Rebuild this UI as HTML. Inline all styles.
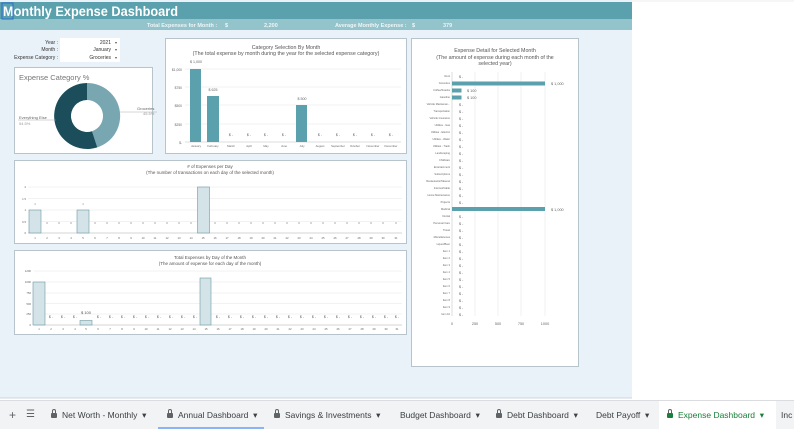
<!DOCTYPE html>
<html><head><meta charset="utf-8"><style>
body{margin:0;width:794px;height:428px;overflow:hidden;background:#fff;font-family:"Liberation Sans",sans-serif;position:relative}
.tabs{position:absolute;left:0;top:400px;width:794px;height:28px;background:#f1f3f4;border-top:1px solid #dadce0;font-size:8.5px;color:#3c4043}
.tab{position:absolute;top:0;height:28px;line-height:28px;white-space:nowrap}
.lock{display:inline-block;width:6px;height:5px;background:#5f6368;border-radius:1px;margin-right:5px;position:relative;top:0}
.lock:before{content:"";position:absolute;left:1px;top:-4px;width:2px;height:3px;border:1px solid #5f6368;border-bottom:none;border-radius:2px 2px 0 0}
</style></head><body>
<svg width="794" height="400" style="position:absolute;left:0;top:0" font-family="Liberation Sans, sans-serif">
<line x1="632" y1="1" x2="794" y2="1" stroke="#ddd" stroke-width="0.6"/>
<rect x="0" y="0" width="632" height="398" fill="#e9f1f9"/>
<rect x="0" y="2" width="632" height="17" fill="#5ba0ad"/>
<rect x="0" y="19" width="632" height="11" fill="#93c3cb"/>
<text x="3" y="16" font-size="13.5" font-weight="bold" fill="#fff" textLength="175" lengthAdjust="spacingAndGlyphs">Monthly Expense Dashboard</text>
<rect x="2" y="3" width="11" height="16" fill="none" stroke="#2a6fd0" stroke-width="1"/>
<g font-size="5.5" font-weight="bold" fill="#eef6f7"><text x="147" y="27">Total Expenses for Month :</text><text x="225" y="27">$</text><text x="264" y="27">2,200</text><text x="335" y="27">Average Monthly Expense :</text><text x="412" y="27">$</text><text x="443" y="27">379</text></g>
<rect x="60" y="38" width="60" height="24" fill="#fff"/>
<g font-size="5" fill="#333" text-anchor="end"><text x="58" y="44">Year :</text><text x="58" y="51">Month :</text><text x="58" y="59">Expense Category :</text>
<text x="111" y="44">2021</text><text x="111" y="51">January</text><text x="111" y="59">Groceries</text></g>
<g font-size="4" fill="#555"><text x="115" y="44">▾</text><text x="115" y="51">▾</text><text x="115" y="59">▾</text></g>
<rect x="14.5" y="67.5" width="138" height="86" fill="#fff" stroke="#b8c4cc"/>
<text x="19" y="80" font-size="7.5" fill="#777">Expense Category %</text>
<path d="M87 83 A33 33 0 0 1 97.3 147.4 L92 131.2 A16 16 0 0 0 87 100 Z" fill="#78a7b2"/>
<path d="M97.3 147.4 A33 33 0 1 1 87 83 L87 100 A16 16 0 1 0 92 131.2 Z" fill="#1b4e5a"/>
<line x1="120" y1="112" x2="157" y2="112" stroke="#999" stroke-width="0.4"/>
<line x1="18" y1="120" x2="56" y2="120" stroke="#999" stroke-width="0.4"/>
<g font-size="4" fill="#666"><text x="137" y="110">Groceries</text><text x="143" y="115" fill="#999">45.5%</text><text x="19" y="119">Everything Else</text><text x="19" y="125" fill="#999">54.5%</text></g>
<rect x="165.5" y="38.5" width="241" height="115" fill="#fff" stroke="#b8c4cc"/>
<g font-size="5.3" fill="#555" text-anchor="middle"><text x="286" y="49">Category Selection By Month</text><text x="286" y="55">(The total expense by month during the year for the selected expense category)</text></g>
<g stroke="#e4e4e4" stroke-width="0.5"><line x1="185" y1="69" x2="401" y2="69"/><line x1="185" y1="87" x2="401" y2="87"/><line x1="185" y1="105" x2="401" y2="105"/><line x1="185" y1="124" x2="401" y2="124"/></g>
<line x1="185" y1="142" x2="401" y2="142" stroke="#bbb" stroke-width="0.5"/>
<g font-size="3.3" fill="#666" text-anchor="end"><text x="182" y="71">$1,000</text><text x="182" y="89">$750</text><text x="182" y="107">$500</text><text x="182" y="126">$250</text><text x="182" y="144">$-</text></g>
<g fill="#5ba0ad"><rect x="190" y="69" width="11" height="73"/><rect x="207" y="96" width="12" height="46"/><rect x="296" y="105" width="11" height="37"/></g>
<g font-size="3.6" fill="#666" text-anchor="middle"><text x="196" y="63">$ 1,000</text><text x="213" y="91">$ 625</text><text x="302" y="100">$ 500</text>
<text x="231" y="136">$ -</text><text x="249" y="136">$ -</text><text x="266" y="136">$ -</text><text x="284" y="136">$ -</text><text x="320" y="136">$ -</text><text x="338" y="136">$ -</text><text x="355" y="136">$ -</text><text x="373" y="136">$ -</text><text x="391" y="136">$ -</text></g>
<g font-size="2.8" fill="#666" text-anchor="middle"><text x="196" y="147">January</text><text x="213" y="147">February</text><text x="231" y="147">March</text><text x="249" y="147">April</text><text x="266" y="147">May</text><text x="284" y="147">June</text><text x="302" y="147">July</text><text x="320" y="147">August</text><text x="338" y="147">September</text><text x="355" y="147">October</text><text x="373" y="147">November</text><text x="391" y="147">December</text></g>
<rect x="411.5" y="38.5" width="167" height="328" fill="#fff" stroke="#b8c4cc"/>
<g font-size="5.3" fill="#555" text-anchor="middle"><text x="495" y="52">Expense Detail for Selected Month</text><text x="495" y="59">(The amount of expense during each month of the</text><text x="495" y="65">selected year)</text></g>
<g stroke="#e4e4e4" stroke-width="0.5"><line x1="475" y1="72" x2="475" y2="316"/><line x1="498" y1="72" x2="498" y2="316"/><line x1="521" y1="72" x2="521" y2="316"/><line x1="545" y1="72" x2="545" y2="316"/></g>
<line x1="452" y1="72" x2="452" y2="316" stroke="#bbb" stroke-width="0.5"/>
<g fill="#5ba0ad"><rect x="452" y="81.5" width="93" height="4"/><rect x="452" y="88.5" width="9.5" height="4"/><rect x="452" y="95.5" width="9.5" height="4"/><rect x="452" y="207" width="93" height="4"/></g>
<g font-size="3.8" fill="#666"><text x="551" y="85">$ 1,000</text><text x="467" y="92">$ 100</text><text x="467" y="99">$ 100</text><text x="551" y="211">$ 1,000</text></g>
<g font-size="2.6" fill="#666" text-anchor="end">
<text x="450" y="77">Rent</text><text x="450" y="84">Groceries</text><text x="450" y="91">Coffee/Snacks</text><text x="450" y="98">Gasoline</text><text x="450" y="105">Vehicle Maintenan...</text><text x="450" y="112">Transportation</text><text x="450" y="119">Vehicle Insurance</text><text x="450" y="126">Utilities - Gas</text><text x="450" y="133">Utilities - Electric</text><text x="450" y="140">Utilities - Water</text><text x="450" y="147">Utilities - Trash</text><text x="450" y="154">Landscaping</text><text x="450" y="161">Childcare</text><text x="450" y="168">Entertainment</text><text x="450" y="175">Subscriptions</text><text x="450" y="182">Restaurants/Takeout</text><text x="450" y="189">Internet/Cable</text><text x="450" y="196">Home Maintenance</text><text x="450" y="203">Projects</text><text x="450" y="210">Medical</text><text x="450" y="217">Dental</text><text x="450" y="224">Personal Care</text><text x="450" y="231">Travel</text><text x="450" y="238">Miscellaneous</text><text x="450" y="245">Liquor/Beer</text><text x="450" y="252">Item 1</text><text x="450" y="259">Item 2</text><text x="450" y="266">Item 3</text><text x="450" y="273">Item 4</text><text x="450" y="280">Item 5</text><text x="450" y="287">Item 6</text><text x="450" y="294">Item 7</text><text x="450" y="301">Item 8</text><text x="450" y="308">Item 9</text><text x="450" y="315">Item 10</text></g>
<g font-size="3.6" fill="#666">
<text x="459" y="78">$ -</text><text x="459" y="106">$ -</text><text x="459" y="113">$ -</text><text x="459" y="120">$ -</text><text x="459" y="127">$ -</text><text x="459" y="134">$ -</text><text x="459" y="141">$ -</text><text x="459" y="148">$ -</text><text x="459" y="155">$ -</text><text x="459" y="162">$ -</text><text x="459" y="169">$ -</text><text x="459" y="176">$ -</text><text x="459" y="183">$ -</text><text x="459" y="190">$ -</text><text x="459" y="197">$ -</text><text x="459" y="204">$ -</text><text x="459" y="218">$ -</text><text x="459" y="225">$ -</text><text x="459" y="232">$ -</text><text x="459" y="239">$ -</text><text x="459" y="246">$ -</text><text x="459" y="253">$ -</text><text x="459" y="260">$ -</text><text x="459" y="267">$ -</text><text x="459" y="274">$ -</text><text x="459" y="281">$ -</text><text x="459" y="288">$ -</text><text x="459" y="295">$ -</text><text x="459" y="302">$ -</text><text x="459" y="309">$ -</text><text x="459" y="316">$ -</text></g>
<g font-size="3.8" fill="#666" text-anchor="middle"><text x="452" y="325">0</text><text x="475" y="325">250</text><text x="498" y="325">500</text><text x="521" y="325">750</text><text x="545" y="325">1000</text></g>
<rect x="14.5" y="160.5" width="392" height="83" fill="#fff" stroke="#b8c4cc"/>
<g font-size="4.5" fill="#555" text-anchor="middle"><text x="210" y="168">#  of Expenses per Day</text><text x="210" y="174">(The number of transactions on each day of the selected month)</text></g>
<g stroke="#e6e6e6" stroke-width="0.5"><line x1="28" y1="187" x2="402" y2="187"/><line x1="28" y1="198.5" x2="402" y2="198.5"/><line x1="28" y1="210" x2="402" y2="210"/><line x1="28" y1="221.5" x2="402" y2="221.5"/></g>
<line x1="28" y1="233" x2="402" y2="233" stroke="#aaa" stroke-width="0.5"/>
<g font-size="2.8" fill="#666" text-anchor="end"><text x="26" y="188">2</text><text x="26" y="200">1.5</text><text x="26" y="211">1</text><text x="26" y="223">0.5</text><text x="26" y="234">0</text></g>
<g fill="#d3e3e7" stroke="#6e9aa3" stroke-width="0.6"><rect x="29" y="210" width="12" height="23"/><rect x="77" y="210" width="12" height="23"/><rect x="197.5" y="187" width="12" height="46"/></g>
<g font-size="2.8" fill="#777" text-anchor="middle"><text x="35" y="205">1</text><text x="83" y="205">1</text>
<text x="47" y="224">0</text><text x="59" y="224">0</text><text x="71" y="224">0</text><text x="95" y="224">0</text><text x="107" y="224">0</text><text x="119" y="224">0</text><text x="131" y="224">0</text><text x="143" y="224">0</text><text x="155" y="224">0</text><text x="167" y="224">0</text><text x="179" y="224">0</text><text x="191" y="224">0</text><text x="215" y="224">0</text><text x="227" y="224">0</text><text x="239" y="224">0</text><text x="251" y="224">0</text><text x="263" y="224">0</text><text x="275" y="224">0</text><text x="287" y="224">0</text><text x="299" y="224">0</text><text x="311" y="224">0</text><text x="323" y="224">0</text><text x="335" y="224">0</text><text x="347" y="224">0</text><text x="359" y="224">0</text><text x="371" y="224">0</text><text x="383" y="224">0</text><text x="396" y="224">0</text></g>
<g font-size="2.8" fill="#666" text-anchor="middle">
<text x="35" y="239">1</text><text x="47" y="239">2</text><text x="59" y="239">3</text><text x="71" y="239">4</text><text x="83" y="239">5</text><text x="95" y="239">6</text><text x="107" y="239">7</text><text x="119" y="239">8</text><text x="131" y="239">9</text><text x="143" y="239">10</text><text x="155" y="239">11</text><text x="167" y="239">12</text><text x="179" y="239">13</text><text x="191" y="239">14</text><text x="203" y="239">15</text><text x="215" y="239">16</text><text x="227" y="239">17</text><text x="239" y="239">18</text><text x="251" y="239">19</text><text x="263" y="239">20</text><text x="275" y="239">21</text><text x="287" y="239">22</text><text x="299" y="239">23</text><text x="311" y="239">24</text><text x="323" y="239">25</text><text x="335" y="239">26</text><text x="347" y="239">27</text><text x="359" y="239">28</text><text x="371" y="239">29</text><text x="383" y="239">30</text><text x="396" y="239">31</text></g>
<rect x="14.5" y="250.5" width="392" height="84" fill="#fff" stroke="#b8c4cc"/>
<g font-size="4.5" fill="#555" text-anchor="middle"><text x="210" y="259">Total Expenses by Day of the Month</text><text x="210" y="265">(The amount of expense for each day of the month)</text></g>
<g stroke="#e6e6e6" stroke-width="0.5"><line x1="34" y1="271" x2="402" y2="271"/><line x1="34" y1="282" x2="402" y2="282"/><line x1="34" y1="293" x2="402" y2="293"/><line x1="34" y1="303.5" x2="402" y2="303.5"/><line x1="34" y1="314" x2="402" y2="314"/></g>
<line x1="34" y1="325" x2="402" y2="325" stroke="#aaa" stroke-width="0.5"/>
<g font-size="2.8" fill="#666" text-anchor="end"><text x="31" y="272">1200</text><text x="31" y="283">1000</text><text x="31" y="294">750</text><text x="31" y="305">500</text><text x="31" y="315">250</text><text x="31" y="326">0</text></g>
<g fill="#d3e3e7" stroke="#6e9aa3" stroke-width="0.6"><rect x="33" y="282" width="12" height="43"/><rect x="80" y="320.5" width="12" height="4.5"/><rect x="200" y="278" width="11" height="47"/></g>
<text x="86" y="314" font-size="4" fill="#555" text-anchor="middle">$ 100</text>
<g font-size="3.6" fill="#666" text-anchor="middle">
<text x="51" y="318">$ -</text><text x="63" y="318">$ -</text><text x="75" y="318">$ -</text><text x="99" y="318">$ -</text><text x="111" y="318">$ -</text><text x="123" y="318">$ -</text><text x="135" y="318">$ -</text><text x="147" y="318">$ -</text><text x="159" y="318">$ -</text><text x="171" y="318">$ -</text><text x="183" y="318">$ -</text><text x="195" y="318">$ -</text><text x="218" y="318">$ -</text><text x="230" y="318">$ -</text><text x="242" y="318">$ -</text><text x="254" y="318">$ -</text><text x="266" y="318">$ -</text><text x="278" y="318">$ -</text><text x="290" y="318">$ -</text><text x="302" y="318">$ -</text><text x="314" y="318">$ -</text><text x="326" y="318">$ -</text><text x="338" y="318">$ -</text><text x="350" y="318">$ -</text><text x="362" y="318">$ -</text><text x="374" y="318">$ -</text><text x="386" y="318">$ -</text><text x="397" y="318">$ -</text></g>
<g font-size="2.8" fill="#666" text-anchor="middle">
<text x="39" y="330">1</text><text x="51" y="330">2</text><text x="63" y="330">3</text><text x="75" y="330">4</text><text x="86" y="330">5</text><text x="98" y="330">6</text><text x="110" y="330">7</text><text x="122" y="330">8</text><text x="134" y="330">9</text><text x="146" y="330">10</text><text x="158" y="330">11</text><text x="170" y="330">12</text><text x="182" y="330">13</text><text x="194" y="330">14</text><text x="206" y="330">15</text><text x="218" y="330">16</text><text x="230" y="330">17</text><text x="242" y="330">18</text><text x="254" y="330">19</text><text x="266" y="330">20</text><text x="278" y="330">21</text><text x="290" y="330">22</text><text x="302" y="330">23</text><text x="314" y="330">24</text><text x="326" y="330">25</text><text x="338" y="330">26</text><text x="350" y="330">27</text><text x="362" y="330">28</text><text x="374" y="330">29</text><text x="386" y="330">30</text><text x="397" y="330">31</text></g>
<line x1="0" y1="398" x2="632" y2="398" stroke="#cfd6dc" stroke-width="1"/>
</svg>
<div class="tabs">
<div class="tab" style="left:9px;font-size:12px;color:#5f6368">+</div>
<div class="tab" style="left:26px;font-size:10px;color:#5f6368">☰</div>
<div class="tab" style="left:51px"><span class="lock"></span>Net Worth - Monthly &nbsp;▾</div>
<div class="tab" style="left:167px"><span class="lock"></span>Annual Dashboard &nbsp;▾</div>
<div class="tab" style="left:158px;top:26px;height:2px;width:106px;background:#8ab4f8"></div>
<div class="tab" style="left:274px"><span class="lock"></span>Savings &amp; Investments &nbsp;▾</div>
<div class="tab" style="left:400px">Budget Dashboard &nbsp;▾</div>
<div class="tab" style="left:496px"><span class="lock"></span>Debt Dashboard &nbsp;▾</div>
<div class="tab" style="left:596px">Debt Payoff &nbsp;▾</div>
<div class="tab" style="left:659px;width:117px;background:#fff;color:#188038;padding-left:8px;box-sizing:border-box"><span class="lock" style="background:#188038"></span>Expense Dashboard &nbsp;▾</div>
<div class="tab" style="left:781px">Inc</div>
</div>
</body></html>
